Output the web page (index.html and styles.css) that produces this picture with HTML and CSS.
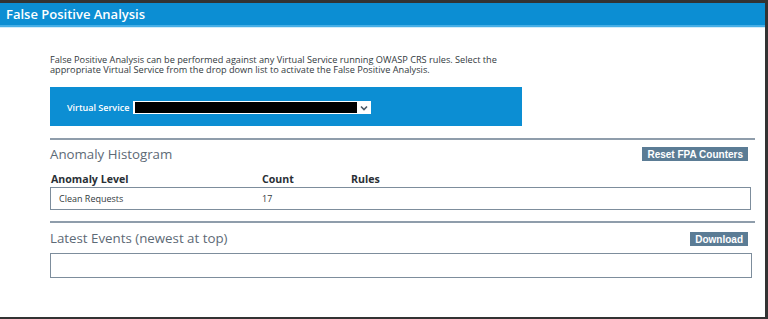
FILE: index.html
```html
<!DOCTYPE html>
<html lang="en">
<head>
    <meta charset="UTF-8">
    <title>False Positive Analysis</title>
    <link rel="stylesheet" href="styles.css">
</head>
<body>
    <div class="window">
        <div class="title-bar">False Positive Analysis</div>

        <div class="content">
            <p class="intro">False Positive Analysis can be performed against any Virtual Service running OWASP CRS rules. Select the appropriate Virtual Service from the drop down list to activate the False Positive Analysis.</p>

            <div class="vs-panel">
                <label class="vs-label">Virtual Service</label>
                <div class="vs-select">
                    <span class="vs-value"></span>
                    <span class="vs-arrow">
                        <svg width="8" height="6" viewBox="0 0 8 6">
                            <path d="M1 1.5 L4 4.5 L7 1.5" fill="none" stroke="#4a5866" stroke-width="1.6"/>
                        </svg>
                    </span>
                </div>
            </div>

            <hr class="divider">

            <div class="section-head histogram-head">
                <h2 class="section-title">Anomaly Histogram</h2>
                <button class="action-btn">Reset FPA Counters</button>
            </div>

            <div class="table-head">
                <div>Anomaly Level</div>
                <div>Count</div>
                <div>Rules</div>
            </div>
            <div class="table-box">
                <div class="table-row">
                    <div>Clean Requests</div>
                    <div>17</div>
                    <div></div>
                </div>
            </div>

            <hr class="divider">

            <div class="section-head events-head">
                <h2 class="section-title">Latest Events (newest at top)</h2>
                <button class="action-btn">Download</button>
            </div>
            <div class="events-box"></div>
        </div>
    </div>
</body>
</html>
```

FILE: styles.css
```css
:root {
    --blue: #0c8ed3;
    --blue-line: #46aee6;
    --frame: #333333;
    --rule: #8f9dab;
    --box-border: #7d8d9c;
    --btn: #5b7c95;
    --text: #333a40;
    --text-grey: #5d6a76;
}

* {
    margin: 0;
    padding: 0;
    box-sizing: border-box;
}

body {
    background: var(--frame);
    padding: 3px 3px 2px 0;
    font-family: "Open Sans", "Noto Sans", sans-serif;
    color: var(--text);
}

.window {
    background: #ffffff;
    width: 765px;
    height: 314px;
}

.title-bar {
    background: var(--blue);
    color: #ffffff;
    height: 24px;
    padding: 2px 6px 0;
    font-size: 13px;
    font-weight: 600;
    border-bottom: 2px solid var(--blue-line);
    box-shadow: 0 1px 0 #d3ecf9;
}

.content {
    padding: 28px 10px 0 50px;
}

.intro {
    width: 475px;
    font-size: 9.2px;
    line-height: 10px;
}

.vs-panel {
    margin-top: 12px;
    width: 472px;
    height: 39px;
    background: var(--blue);
    display: flex;
    align-items: center;
    padding: 2px 0 0 17px;
    gap: 4px;
}

.vs-label {
    color: #ffffff;
    font-size: 9px;
    font-weight: 600;
}

.vs-select {
    display: flex;
    width: 238px;
    height: 13px;
    border: 1px solid #ffffff;
    border-left-width: 2px;
}

.vs-value {
    flex: 1;
    background: #000000;
}

.vs-arrow {
    width: 13px;
    background: #ffffff;
    display: flex;
    align-items: center;
    justify-content: center;
}

.divider {
    border: none;
    border-top: 2px solid var(--rule);
    margin-top: 12px;
}

.section-head {
    display: flex;
    justify-content: space-between;
    align-items: center;
    padding-right: 7px;
}

.histogram-head {
    margin-top: 7px;
    height: 14px;
}

.events-head {
    margin-top: 9px;
    height: 14px;
}

.events-head .section-title {
    margin-top: -2px;
}

.section-title {
    font-size: 13.3px;
    font-weight: 400;
    color: var(--text-grey);
    line-height: 14px;
}

.action-btn {
    background: var(--btn);
    color: #ffffff;
    border: none;
    font-family: "Liberation Sans", Arial, sans-serif;
    font-size: 10px;
    font-weight: bold;
    height: 14px;
    padding: 0 5px;
}

.table-head {
    display: grid;
    grid-template-columns: 212px 89px 1fr;
    margin-top: 11px;
    font-size: 10.6px;
    font-weight: 700;
    line-height: 14px;
    color: #2a3036;
}

.table-head div:first-child {
    padding-left: 1px;
}

.table-box {
    margin-top: 1px;
    margin-right: 4px;
    height: 23px;
    border: 1px solid var(--box-border);
}

.table-row {
    display: grid;
    grid-template-columns: 203px 89px 1fr;
    padding: 5px 8px 0;
    font-size: 9px;
    line-height: 12px;
}

.table-box + .divider {
    margin-top: 11px;
}

.events-box {
    margin-top: 7px;
    margin-right: 3px;
    height: 25px;
    border: 1px solid var(--box-border);
}
```
